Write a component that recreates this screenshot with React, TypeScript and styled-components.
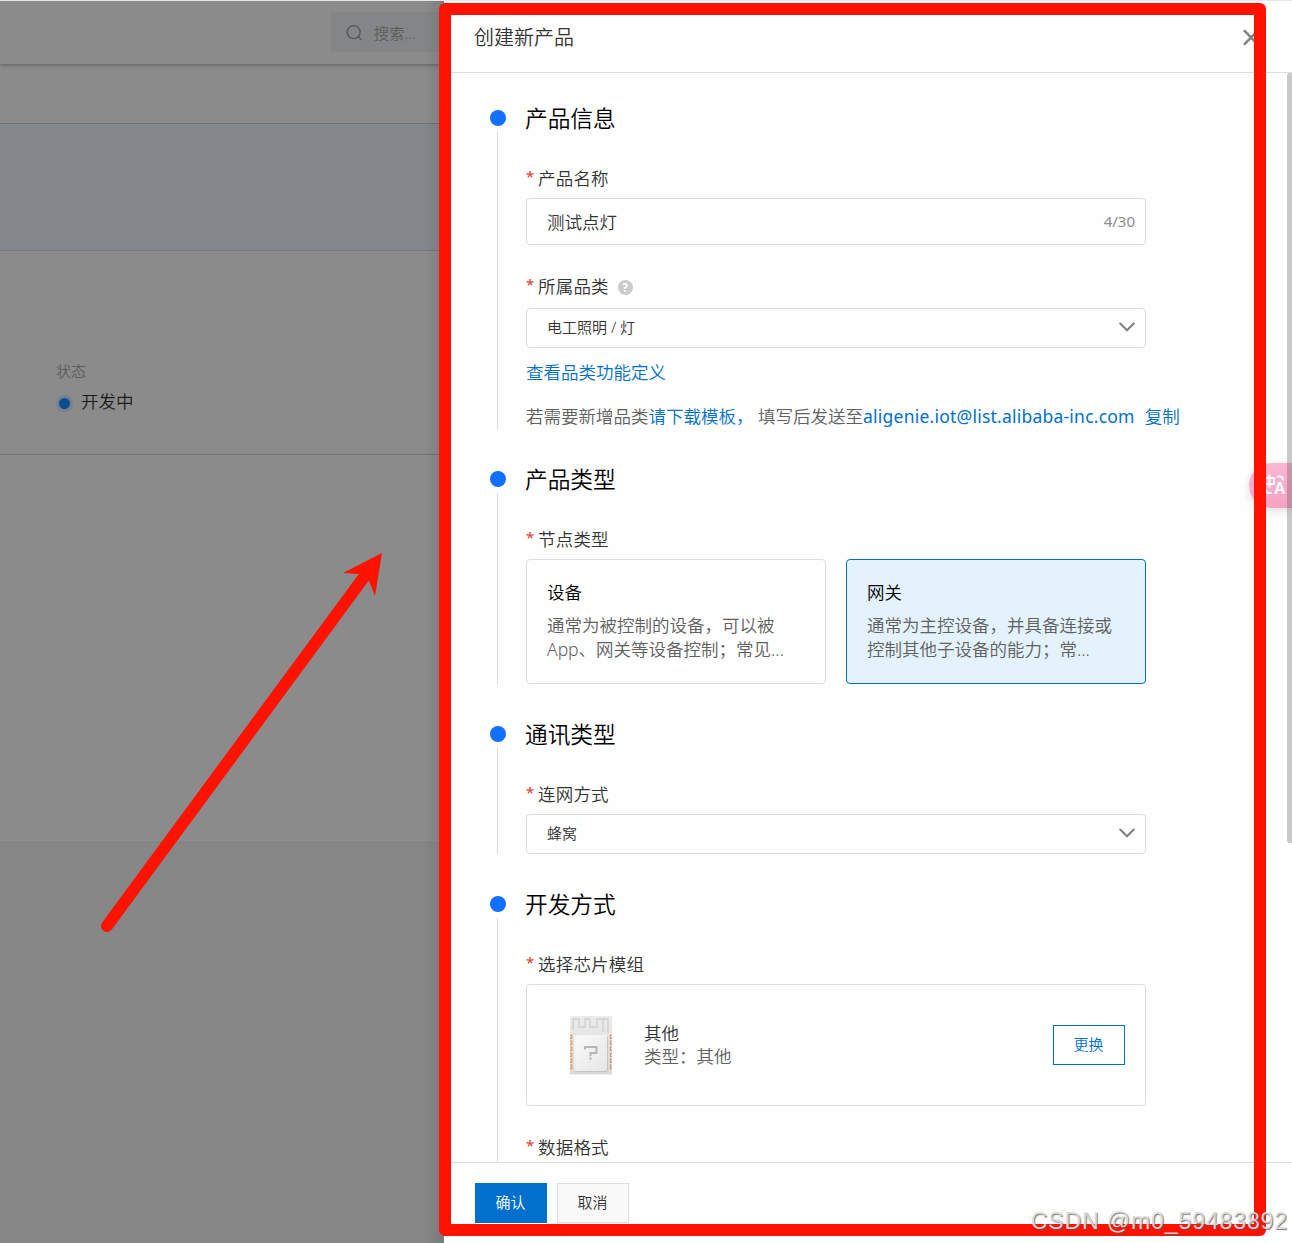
import React from "react";
import styled, { createGlobalStyle } from "styled-components";

const GlobalStyle = createGlobalStyle`
  * { box-sizing: border-box; }
  body {
    margin: 0;
    overflow: hidden;
    background: #fff;
    font-family: "Noto Sans", "Noto Sans CJK SC", sans-serif;
    font-weight: 350;
    font-size: 17.5px;
    line-height: 24px;
    color: #333;
  }
`;

const Screen = styled.div`
  position: relative;
  display: flex;
  width: 1292px;
  height: 1243px;
  overflow: hidden;
  border-top: 1px solid #e6e8e8;
`;

/* ---------- dimmed page ---------- */
const Page = styled.div`
  position: relative;
  display: flex;
  flex-direction: column;
  width: 444px;
  background: #8b8b8b;
  &::after {
    content: "";
    position: absolute;
    inset: 0 0 0 auto;
    width: 20px;
    background: linear-gradient(to right, rgba(0, 0, 0, 0), rgba(0, 0, 0, 0.1));
  }
`;

const TopBar = styled.div`
  display: flex;
  justify-content: flex-end;
  align-items: flex-start;
  height: 63px;
  padding-top: 11px;
  box-shadow: 0 1px 4px rgba(0, 0, 0, 0.32);
`;

const SearchBox = styled.div`
  display: flex;
  align-items: center;
  gap: 11px;
  width: 113px;
  height: 40px;
  padding: 1px 0 0 15px;
  background: #838587;
  color: #5c5c5c;
  font-size: 15px;
  letter-spacing: 0.2px;
`;

const Toolbar = styled.div`
  height: 60px;
  border-bottom: 1px solid #727272;
`;

const Banner = styled.div`
  height: 127px;
  background: #84888d;
  border-bottom: 1px solid #767778;
`;

const StatusPanel = styled.div`
  height: 204px;
  padding: 109px 0 0 56px;
  border-bottom: 1px solid #747474;
`;

const StatusLabel = styled.div`
  font-size: 15px;
  line-height: 22px;
  color: #5e5e5e;
`;

const StatusValue = styled.div`
  display: flex;
  align-items: center;
  gap: 8px;
  margin-top: 6px;
  line-height: 26px;
  color: #1c1c1c;
`;

const StatusDot = styled.span`
  width: 17px;
  height: 17px;
  margin-top: 5px;
  border: 3px solid #75818f;
  border-radius: 50%;
  background: #0b4d8d;
`;

const PageBody = styled.div`
  height: 388px;
  border-bottom: 1px solid #808080;
`;

const PageFoot = styled.div`
  flex: 1;
  background: #878787;
`;

/* ---------- drawer ---------- */
const Drawer = styled.section`
  display: flex;
  flex-direction: column;
  flex: 1;
  background: #fefefe;
  border-top-right-radius: 10px;
`;

const DrawerHeader = styled.header`
  display: flex;
  justify-content: space-between;
  align-items: center;
  height: 72px;
  padding: 3px 33px 0 30px;
  border-bottom: 1px solid #dedede;
  font-size: 20px;
`;

const DrawerBody = styled.div`
  height: 1089px;
  padding: 30px 0 0 46px;
  overflow: hidden;
`;

const DrawerFooter = styled.footer`
  display: flex;
  gap: 10px;
  flex: 1;
  padding: 20px 31px;
  border-top: 1px solid #dedede;
`;

const Step = styled.div`
  display: flex;
  gap: 20px;
  padding-bottom: 35px;
`;

const Rail = styled.div`
  display: flex;
  flex-direction: column;
  align-items: center;
  width: 16px;
  padding-top: 7px;
`;

const Dot = styled.span`
  width: 16px;
  height: 16px;
  border-radius: 50%;
  background: #1270ff;
`;

const RailLine = styled.span`
  flex: 1;
  width: 1px;
  margin: 6px 1px 0 0;
  background: #dedede;
`;

const StepContent = styled.div`
  display: flex;
  flex-direction: column;
  width: 700px;
`;

const StepTitle = styled.h2`
  height: 30px;
  margin: 0 0 30px;
  font-size: 22.7px;
  font-weight: 350;
  line-height: 32px;
  text-indent: -1px;
  color: #000;
`;

const Field = styled.div`
  & + & { margin-top: 26px; }
`;

const Label = styled.div<{ $gap?: number }>`
  display: flex;
  align-items: center;
  height: 30px;
  padding-bottom: 1px;
  margin-bottom: ${(p) => p.$gap ?? 5}px;
  white-space: nowrap;
  letter-spacing: 0.2px;
  &::before {
    content: "*";
    width: 12px;
    padding-bottom: 3px;
    font-size: 15px;
    font-weight: 400;
    color: #e0352b;
  }
`;

const HelpIcon = styled.span`
  display: flex;
  align-items: center;
  justify-content: center;
  width: 15px;
  height: 15px;
  margin: 4px 0 0 9px;
  border-radius: 50%;
  background: #cbcbcb;
  color: #fff;
  font-size: 12px;
  font-weight: 700;
`;

const Box = styled.div<{ $height: number; $small?: boolean }>`
  display: flex;
  align-items: center;
  justify-content: space-between;
  width: 620px;
  height: ${(p) => p.$height}px;
  padding: 0 10px ${(p) => (p.$small ? 2 : 0)}px 20px;
  border: 1px solid #dcdcdc;
  border-radius: 4px;
  font-size: ${(p) => (p.$small ? 15 : 17.5)}px;
`;

const Counter = styled.span`
  padding-bottom: 2px;
  font-size: 15px;
  font-weight: 400;
  color: #8c8c8c;
`;

const HelpLine = styled.div<{ $top: number }>`
  margin-top: ${(p) => p.$top}px;
  line-height: 25px;
  color: #606060;
  white-space: nowrap;
`;

const Link = styled.a<{ $left?: number }>`
  margin-left: ${(p) => p.$left ?? 0}px;
  color: #0070cc;
`;

const Mail = styled(Link)`
  font-weight: 400;
  letter-spacing: 0.22px;
`;

const Options = styled.div`
  display: flex;
  gap: 20px;
`;

const Option = styled.div<{ $active?: boolean }>`
  width: 300px;
  height: 125px;
  padding: 20px;
  border: 1px solid ${(p) => (p.$active ? "#0070cc" : "#dedede")};
  border-radius: 4px;
  background: ${(p) => (p.$active ? "#e3f2fd" : "transparent")};
`;

const OptionTitle = styled.div`
  margin-bottom: 8px;
  line-height: 25px;
  color: #000;
`;

const OptionText = styled.div`
  line-height: 24px;
  color: #606060;
`;

const ModuleCard = styled.div`
  display: flex;
  align-items: center;
  width: 620px;
  height: 122px;
  padding: 0 20px 0 43px;
  border: 1px solid #dedede;
  border-radius: 4px;
`;

const ModuleInfo = styled.div`
  flex: 1;
  margin-left: 32px;
  line-height: 23px;
`;

const ModuleKind = styled.div`
  color: #606060;
`;

const Button = styled.button<{ $kind: "primary" | "normal" | "outline" }>`
  width: 72px;
  height: 40px;
  padding: 0 1px 2px 0;
  font: inherit;
  font-size: 15px;
  line-height: 24px;
  border: 1px solid ${(p) => (p.$kind === "normal" ? "#dedede" : "#0070cc")};
  background: ${(p) => ({ primary: "#0070cc", normal: "#f9f9f9", outline: "#fff" })[p.$kind]};
  color: ${(p) => ({ primary: "#fff", normal: "#333", outline: "#0070cc" })[p.$kind]};
`;

/* ---------- floating layers ---------- */
const TranslateTab = styled.div`
  position: absolute;
  top: 462px;
  right: 0;
  width: 43px;
  height: 45px;
  border-radius: 22px 0 0 22px;
  background: linear-gradient(#fbb6d3, #f7a3c4);
  box-shadow: 0 3px 10px rgba(0, 0, 0, 0.12);
`;

const Scrollbar = styled.div`
  position: absolute;
  top: 72px;
  right: 0;
  width: 5px;
  height: 770px;
  border-radius: 3px 0 0 3px;
  background: rgba(80, 80, 80, 0.3);
`;

const Frame = styled.div`
  position: absolute;
  top: 2px;
  left: 439px;
  width: 827px;
  height: 1233px;
  border: 12px solid #ff1200;
  border-radius: 6px;
`;

const Arrow = styled.svg`
  position: absolute;
  top: -1px;
  left: 0;
`;

const Watermark = styled.div`
  position: absolute;
  top: 1206px;
  right: 4px;
  font-family: "Liberation Sans", sans-serif;
  font-size: 23px;
  font-weight: 400;
  line-height: 28px;
  letter-spacing: 0.9px;
  white-space: nowrap;
  color: rgba(222, 222, 222, 0.92);
  text-shadow: 1px 1px 1px rgba(90, 90, 90, 0.8);
`;

const Chevron = () => (
  <svg width="16" height="10" viewBox="0 0 16 10" fill="none" stroke="#808080" strokeWidth="2">
    <path d="M1.2 1.500 8 8.300l6.800-6.800" strokeLinecap="round" />
  </svg>
);

const ChipPicture = () => (
  <svg width="42" height="60" viewBox="0 0 42 60">
    <defs>
      <linearGradient id="board" x1="0" y1="0" x2="0" y2="1">
        <stop offset="0" stopColor="#ebebeb" />
        <stop offset="1" stopColor="#dadada" />
      </linearGradient>
      <linearGradient id="shield" x1="0" y1="0" x2="1" y2="1">
        <stop offset="0" stopColor="#fafafa" />
        <stop offset="1" stopColor="#e6e6e6" />
      </linearGradient>
    </defs>
    <path d="M0 1h42v58.500H0z" fill="url(#board)" />
    <path d="M3 15V4h6v8h6V4h5v8h7V4h11v14M33 4v13" fill="none" stroke="#cfcfcf" strokeWidth="1.3" />
    {[21, 27, 33, 39, 45, 51].map((y) => (
      <g key={y} fill="none" stroke="#d99a69" strokeWidth="1.100">
        <path d={`M0 ${y - 1}h1.7v3.4H0M42 ${y - 1}h-1.7v3.4H42`} />
      </g>
    ))}
    <rect x="5" y="21" width="33" height="36" rx="2" fill="#c4c4c4" />
    <rect x="4.5" y="20" width="32.5" height="36" rx="2" fill="url(#shield)" />
    <path d="M15 34.5v-2.6h11.5v6h-6v3.4M20.5 42.5v2.3" fill="none" stroke="#b5b5b5" strokeWidth="2" />
  </svg>
);

const TranslateIcon = () => (
  <svg width="43" height="45" viewBox="0 0 43 45" fill="none" stroke="#fff" strokeWidth="2">
    <rect x="16" y="15" width="9" height="6" />
    <path d="M20.5 11.500v13M28 13.500h3q3 0 3 4M17 26v1q0 3 3 3h3" />
    <text x="25" y="31" fill="#fff" stroke="none" fontFamily="Liberation Sans, sans-serif" fontSize="16" fontWeight="700">A</text>
  </svg>
);

export default function App() {
  return (
    <Screen>
      <GlobalStyle />
      <Page>
        <TopBar>
          <SearchBox>
            <svg width="17" height="17" viewBox="0 0 17 17" fill="none" stroke="#555" strokeWidth="1.3">
              <circle cx="7.700" cy="8.200" r="6.500" />
              <path d="m12.400 12.900 3 3.200" />
            </svg>
            搜索...
          </SearchBox>
        </TopBar>
        <Toolbar />
        <Banner />
        <StatusPanel>
          <StatusLabel>状态</StatusLabel>
          <StatusValue>
            <StatusDot />
            开发中
          </StatusValue>
        </StatusPanel>
        <PageBody />
        <PageFoot />
      </Page>

      <Drawer>
        <DrawerHeader>
          创建新产品
          <svg width="16" height="18" viewBox="0 0 16 18" fill="none" stroke="#808080" strokeWidth="2.600">
            <path d="m1 1 14 16M1 17 15 1" transform="translate(0 .4) scale(1 .9)" />
          </svg>
        </DrawerHeader>
        <DrawerBody>
          <Step>
            <Rail><Dot /><RailLine /></Rail>
            <StepContent>
              <StepTitle>产品信息</StepTitle>
              <Field>
                <Label>产品名称</Label>
                <Box $height={47}>
                  测试点灯
                  <Counter>4/30</Counter>
                </Box>
              </Field>
              <Field>
                <Label $gap={7}>所属品类<HelpIcon>?</HelpIcon></Label>
                <Box $height={40} $small>
                  电工照明 / 灯
                  <Chevron />
                </Box>
                <HelpLine $top={12}><Link>查看品类功能定义</Link></HelpLine>
                <HelpLine $top={19}>
                  若需要新增品类<Link>请下载模板，</Link> 填写后发送至<Mail>aligenie.iot@list.alibaba-inc.com</Mail>
                  <Link $left={10}>复制</Link>
                </HelpLine>
              </Field>
            </StepContent>
          </Step>
          <Step>
            <Rail><Dot /><RailLine /></Rail>
            <StepContent>
              <StepTitle>产品类型</StepTitle>
              <Field>
                <Label>节点类型</Label>
                <Options>
                  <Option>
                    <OptionTitle>设备</OptionTitle>
                    <OptionText>通常为被控制的设备，可以被App、网关等设备控制；常见...</OptionText>
                  </Option>
                  <Option $active>
                    <OptionTitle>网关</OptionTitle>
                    <OptionText>通常为主控设备，并具备连接或控制其他子设备的能力；常...</OptionText>
                  </Option>
                </Options>
              </Field>
            </StepContent>
          </Step>
          <Step>
            <Rail><Dot /><RailLine /></Rail>
            <StepContent>
              <StepTitle>通讯类型</StepTitle>
              <Field>
                <Label>连网方式</Label>
                <Box $height={40} $small>
                  蜂窝
                  <Chevron />
                </Box>
              </Field>
            </StepContent>
          </Step>
          <Step>
            <Rail><Dot /><RailLine /></Rail>
            <StepContent>
              <StepTitle>开发方式</StepTitle>
              <Field>
                <Label>选择芯片模组</Label>
                <ModuleCard>
                  <ChipPicture />
                  <ModuleInfo>
                    <div>其他</div>
                    <ModuleKind>类型：其他</ModuleKind>
                  </ModuleInfo>
                  <Button $kind="outline">更换</Button>
                </ModuleCard>
              </Field>
              <Field>
                <Label>数据格式</Label>
              </Field>
            </StepContent>
          </Step>
        </DrawerBody>
        <DrawerFooter>
          <Button $kind="primary">确认</Button>
          <Button $kind="normal">取消</Button>
        </DrawerFooter>
      </Drawer>

      <TranslateTab><TranslateIcon /></TranslateTab>
      <Scrollbar />
      <Arrow width="440" height="1000" viewBox="0 0 440 1000" fill="#ff1200">
        <path d="M107 926 364 577" stroke="#ff1200" strokeWidth="12" strokeLinecap="round" />
        <path d="M382 553 343 573 359 574 369 581 375 596Z" />
      </Arrow>
      <Frame />
      <Watermark>CSDN @m0_59483892</Watermark>
    </Screen>
  );
}
